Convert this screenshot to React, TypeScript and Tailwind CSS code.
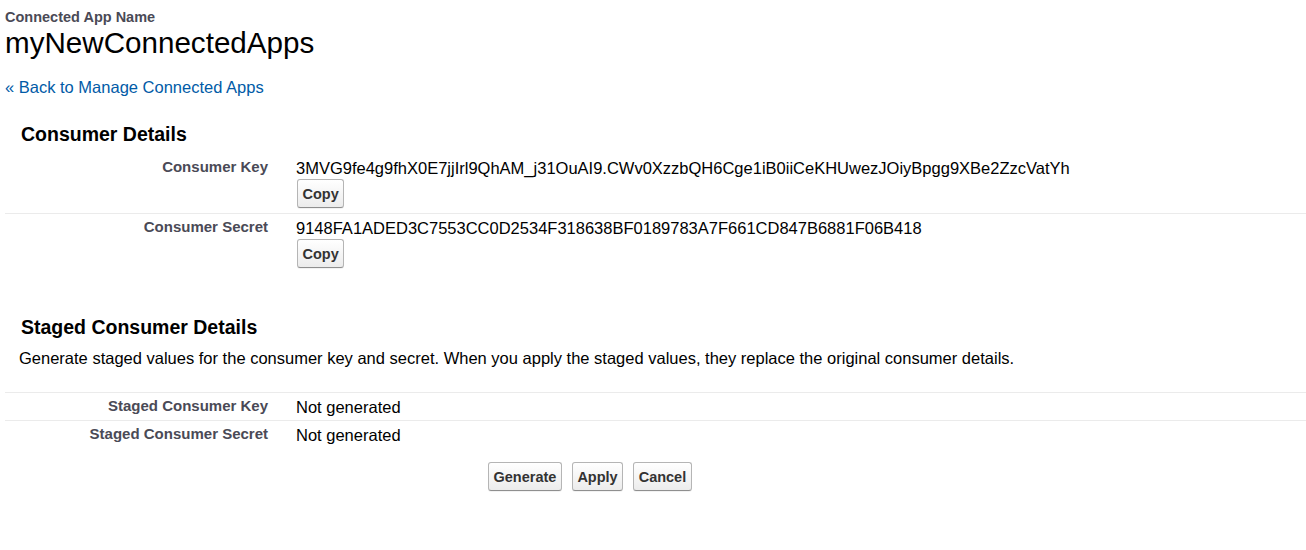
import React from "react";

function Btn({ children }: { children: React.ReactNode }) {
  return (
    <button className="h-[29px] px-[4.5px] rounded-[3px] border border-[#b5b5b5] border-b-[#8f8f8f] bg-gradient-to-b from-[#ffffff] to-[#ececec] text-[14.5px] font-bold text-[#333333] leading-[18px] shadow-[0_1px_0_rgba(0,0,0,0.05)]">
      {children}
    </button>
  );
}

function Row({
  label,
  value,
  copy,
  border,
}: {
  label: string;
  value: string;
  copy?: boolean;
  border?: boolean;
}) {
  return (
    <div className={"flex " + (border ? "border-b border-[#ebebeb]" : "")}>
      <div className="w-[275px] shrink-0 pr-[12px] pt-[4px] pb-[4px] text-right text-[15px] font-bold leading-[18px] text-[#4a4a56]">
        {label}
      </div>
      <div className={"pl-[16px] pt-[5px] " + (copy ? "pb-[5px]" : "pb-[4px]")}>
        <div className="text-[16.5px] leading-[18px] text-black">{value}</div>
        {copy && (
          <div className="mt-[2px] pl-[1px]">
            <Btn>Copy</Btn>
          </div>
        )}
      </div>
    </div>
  );
}

export default function App() {
  return (
    <div className="w-[1306px] h-[550px] bg-white pl-[5px] font-['Liberation_Sans',Arial,sans-serif] text-black overflow-hidden">
      <div className="pt-[8px] text-[14.5px] font-bold leading-[18px] text-[#4a4a56]">
        Connected App Name
      </div>
      <div className="text-[29.6px] leading-[34px] text-black">myNewConnectedApps</div>
      <div className="mt-[17px] text-[16.5px] leading-[20px] text-[#015ba7]">
        « Back to Manage Connected Apps
      </div>

      <div className="mt-[25px] pl-[16px] text-[19.5px] font-bold leading-[24px] text-black">
        Consumer Details
      </div>
      <div className="mt-[8px]">
        <Row
          label="Consumer Key"
          value="3MVG9fe4g9fhX0E7jjIrl9QhAM_j31OuAI9.CWv0XzzbQH6Cge1iB0iiCeKHUwezJOiyBpgg9XBe2ZzcVatYh"
          copy
          border
        />
        <Row
          label="Consumer Secret"
          value="9148FA1ADED3C7553CC0D2534F318638BF0189783A7F661CD847B6881F06B418"
          copy
        />
      </div>

      <div className="mt-[42px] pl-[16px] text-[19.5px] font-bold leading-[24px] text-black">
        Staged Consumer Details
      </div>
      <div className="mt-[10px] pl-[14px] text-[16.5px] leading-[18px] text-black">
        Generate staged values for the consumer key and secret. When you apply the staged values, they replace the original consumer details.
      </div>
      <div className="mt-[25px] border-t border-[#ebebeb]">
        <Row label="Staged Consumer Key" value="Not generated" border />
        <Row label="Staged Consumer Secret" value="Not generated" />
      </div>

      <div className="mt-[14px] pl-[483px] flex gap-[10px]">
        <Btn>Generate</Btn>
        <Btn>Apply</Btn>
        <Btn>Cancel</Btn>
      </div>
    </div>
  );
}
